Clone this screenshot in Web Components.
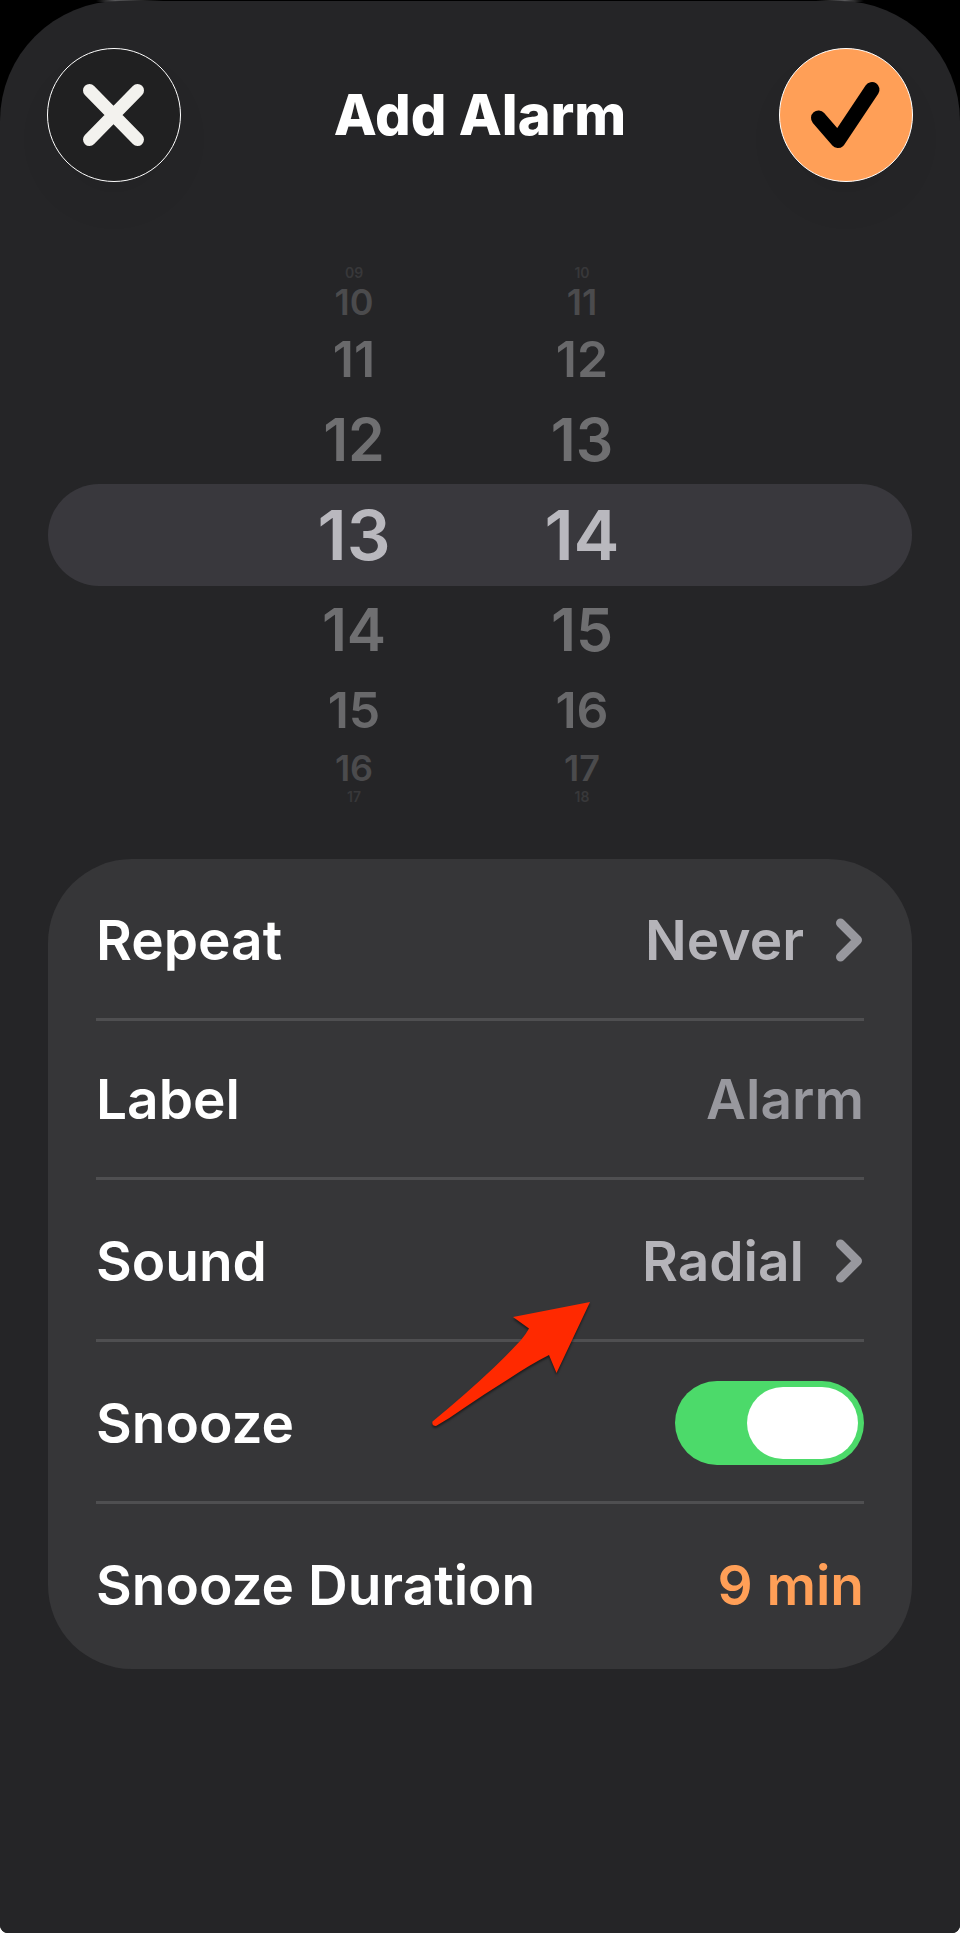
<!DOCTYPE html>
<html lang="en">
<head>
<meta charset="utf-8">
<meta name="viewport" content="width=device-width, initial-scale=1">
<title>Add Alarm</title>
<style>
  html { background: #fff; }
  body {
    margin: 0;
    font-family: Inter, "Liberation Sans", sans-serif;
    font-size: 55px;
    line-height: 64px;
    color: #fff;
  }
</style>
</head>
<body>
<alarm-sheet>
  <sheet-header slot="header" title="Add Alarm"></sheet-header>
  <time-wheel>
    <wheel-column label="Hour" start="9"></wheel-column>
    <wheel-column label="Minute" start="10"></wheel-column>
  </time-wheel>
  <settings-card>
    <settings-row kind="link" title="Repeat" value="Never"></settings-row>
    <settings-row kind="text" title="Label" value="Alarm"></settings-row>
    <settings-row kind="link" title="Sound" value="Radial"></settings-row>
    <settings-row kind="switch" title="Snooze"></settings-row>
    <settings-row kind="pick" title="Snooze Duration" value="9 min"></settings-row>
    <note-arrow slot="note"></note-arrow>
  </settings-card>
</alarm-sheet>

<script>
const defineComp = (name, template, onConnected = () => {}) => {
  const templ = document.createElement('template');
  templ.innerHTML = template;
  customElements.define(name, class extends HTMLElement {
    constructor() {
      super();
      this.attachShadow({ mode: 'open' });
      this.shadowRoot.appendChild(templ.content.cloneNode(true));
    }

    connectedCallback() {
      onConnected(this, this.shadowRoot);
    }
  });
};

defineComp('alarm-sheet', `
  <style>
  :host {
    display: flex;
    box-sizing: border-box;
    min-height: 100vh;
    padding-top: 1px;
    border-radius: 0 0 8px 8px;
    overflow: hidden;
    /* the sheet underneath shows as a thin edge near both corners */
    background:
      linear-gradient(90deg, transparent 10%, #58585a 12%, transparent 17%,
        transparent 85%, #58585a 88%, transparent 90%) 0 0 / 100% 2px no-repeat,
      #000;
  }
  .sheet {
    flex: 1;
    min-width: 0;
    box-sizing: border-box;
    padding: 47px 48px;
    border-radius: 120px 120px 0 0;
    background: #252527;
  }
  main {
    display: grid;
    grid-template-columns: minmax(0, 1fr);
    gap: 54px;
    padding-top: 83px;
  }
  </style>
  <div class="sheet">
    <slot name="header"></slot>
    <main><slot></slot></main>
  </div>
`);

defineComp('round-button', `
  <style>
  :host {
    display: block;
    --fill: #202021;
    --ink: #f3f2ee;
  }
  :host([tone="accent"]) {
    --fill: #ff9f57;
    --ink: #000;
  }
  button {
    display: block;
    box-sizing: border-box;
    width: 134px;
    height: 134px;
    padding: 0;
    border: 1px solid #fff;
    border-radius: 50%;
    background: var(--fill);
    color: var(--ink);
    box-shadow: 0 24px 40px rgba(0, 0, 0, .04);
  }
  </style>
  <button type="button"><slot></slot></button>
`, (self, root) => {
  root.querySelector('button').setAttribute('aria-label', self.getAttribute('label'));
});

defineComp('sheet-header', `
  <style>
  :host {
    display: flex;
    align-items: center;
    justify-content: space-between;
    margin: 0 -1px;
  }
  h1 {
    margin: 0;
    font-size: 56px;
    font-weight: 800;
  }
  svg {
    display: block;
    width: 132px;
    height: 132px;
    fill: none;
    stroke: currentColor;
    stroke-linecap: round;
    stroke-linejoin: round;
  }
  </style>
  <round-button label="Cancel">
    <svg viewBox="1 1 132 132" stroke-width="13"><path d="M42.5 42.5L90.5 91.5M90.5 42.5L42.5 91.5"/></svg>
  </round-button>
  <h1 id="title"></h1>
  <round-button label="Save" tone="accent">
    <svg viewBox="1 1 132 132" stroke-width="15"><path d="M39.5 70L59 92.5L93 41.5"/></svg>
  </round-button>
`, (self, root) => {
  root.getElementById('title').innerText = self.getAttribute('title');
});

defineComp('time-wheel', `
  <style>
  :host {
    display: grid;
    grid-template-columns: minmax(0, 1fr);
    grid-template-rows: 219px 102px 219px;
  }
  .band {
    grid-area: 2 / 1;
    border-radius: 51px;
    background: #39383d;
  }
  .columns {
    grid-area: 1 / 1 / 4 / 1;
    display: flex;
    justify-content: center;
    gap: 128px;
    padding-right: 24px;
  }
  </style>
  <div class="band"></div>
  <div class="columns"><slot></slot></div>
`);

// distance from the selected row picks the size and the shade
defineComp('wheel-column', `
  <style>
  :host {
    display: block;
    width: 100px;
    font-weight: 600;
  }
  ul {
    margin: 0;
    padding: 0;
    list-style: none;
    text-align: center;
  }
  .d0 { font-size: 69px; line-height: 102px; color: #b9b8be; }
  .d1 { font-size: 59px; line-height: 88px; color: #6f6f71; }
  .d2 { font-size: 50px; line-height: 73px; color: #69696b; }
  .d3 { font-size: 36px; line-height: 42px; color: #4b4b4d; }
  .d4 { font-size: 14px; line-height: 16px; color: #38383a; }
  </style>
  <ul role="listbox"></ul>
`, (self, root) => {
  const list = root.querySelector('ul');
  const start = Number(self.getAttribute('start'));
  list.setAttribute('aria-label', self.getAttribute('label'));
  list.innerHTML = [4, 3, 2, 1, 0, 1, 2, 3, 4].map((d, i) => `
    <li role="option" class="d${d}" aria-selected="${d === 0}">${String(start + i).padStart(2, '0')}</li>
  `).join('');
});

defineComp('settings-card', `
  <style>
  :host {
    display: block;
    position: relative;
    padding: 0 48px;
    border-radius: 84px;
    background: #363638;
  }
  </style>
  <slot></slot>
  <slot name="note"></slot>
`);

const chevron = '<svg viewBox="0 0 28 44"><path d="M4.5 5L21.5 22L4.5 39"/></svg>';

const rowKinds = {
  link: (title, value) => `<button type="button"><span>${title}</span><span class="value">${value}${chevron}</span></button>`,
  pick: (title, value) => `<button type="button"><span>${title}</span><span class="value accent">${value}</span></button>`,
  text: (title, value) => `<label for="field">${title}</label><input id="field" type="text" value="${value}">`,
  switch: title => `<label for="field">${title}</label><input id="field" type="checkbox" role="switch" checked>`,
};

defineComp('settings-row', `
  <style>
  :host {
    display: block;
    padding: 49px 0 46px;
    border-bottom: 3px solid #4f4f51;
    font-weight: 600;
  }
  :host([kind="text"]) {
    padding-top: 46px;
  }
  :host(:last-of-type) {
    padding-bottom: 52px;
    border-bottom: 0;
  }
  #row, button {
    display: flex;
    align-items: center;
    justify-content: space-between;
    height: 64px;
  }
  button, input {
    margin: 0;
    padding: 0;
    border: 0;
    background: none;
    color: inherit;
    font: inherit;
  }
  button {
    width: 100%;
  }
  .value {
    display: flex;
    align-items: center;
    gap: 32px;
    color: #b5b4b9;
  }
  .accent {
    color: #ff9f57;
  }
  svg {
    width: 28px;
    height: 44px;
    fill: none;
    stroke: #98989e;
    stroke-width: 9;
    stroke-linecap: round;
    stroke-linejoin: round;
  }
  input[type="text"] {
    flex: 1;
    min-width: 0;
    text-align: right;
    color: #98989e;
  }
  input[type="checkbox"] {
    appearance: none;
    display: flex;
    align-items: center;
    justify-content: flex-end;
    box-sizing: border-box;
    flex: none;
    width: 189px;
    height: 84px;
    padding: 6px;
    border-radius: 42px;
    background: #4cda6a;
  }
  input[type="checkbox"]::before {
    content: "";
    width: 111px;
    height: 72px;
    border-radius: 36px;
    background: #fff;
  }
  </style>
  <div id="row"></div>
`, (self, root) => {
  const make = rowKinds[self.getAttribute('kind')];
  root.getElementById('row').innerHTML = make(self.getAttribute('title'), self.getAttribute('value'));
});

defineComp('note-arrow', `
  <style>
  :host {
    position: absolute;
    top: 439px;
    right: 318px;
    pointer-events: none;
  }
  svg {
    display: block;
    width: 166px;
    height: 134px;
    fill: #ff2900;
    filter: drop-shadow(0 2px 1px rgba(0, 0, 0, .5));
  }
  </style>
  <svg viewBox="428 1298 166 134" aria-hidden="true">
    <path d="M590 1302L513 1317L529 1328.5Q526 1334 521 1340Q508 1354 494.500 1367Q466 1394 432.500 1421.500Q431.500 1426 436 1426Q450 1418 464 1408Q486 1393 507 1380Q531 1364 549 1355L556.500 1373Z"/>
  </svg>
`);
</script>
</body>
</html>
